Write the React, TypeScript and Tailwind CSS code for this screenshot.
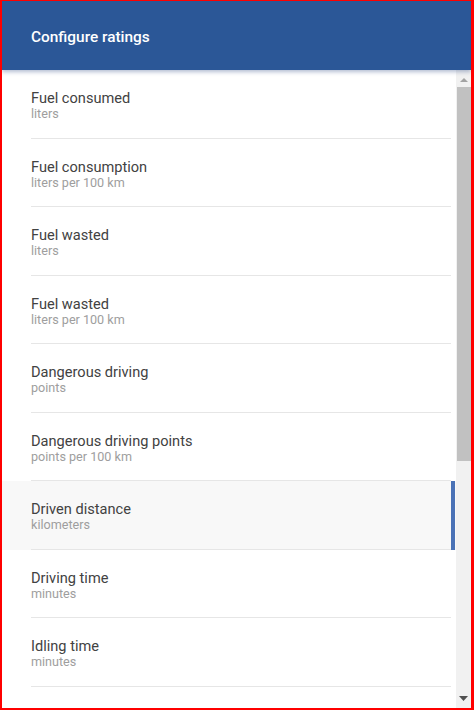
import React from "react";

const items: { title: string; unit: string; active?: boolean }[] = [
  { title: "Fuel consumed", unit: "liters" },
  { title: "Fuel consumption", unit: "liters per 100 km" },
  { title: "Fuel wasted", unit: "liters" },
  { title: "Fuel wasted", unit: "liters per 100 km" },
  { title: "Dangerous driving", unit: "points" },
  { title: "Dangerous driving points", unit: "points per 100 km" },
  { title: "Driven distance", unit: "kilometers", active: true },
  { title: "Driving time", unit: "minutes" },
  { title: "Idling time", unit: "minutes" },
  { title: "", unit: "" },
];

export default function App() {
  return (
    <div
      className="w-[474px] h-[710px] overflow-hidden bg-white border-solid border-[#ff0000] border-t-[1px] border-l-[2px] border-r-[3px] border-b-[2px] flex flex-col"
      style={{ fontFamily: "Roboto, 'Liberation Sans', sans-serif" }}
    >
      <div className="relative z-10 h-[69px] shrink-0 bg-[#2b5797] pl-[29px] pt-[26px] shadow-[0_2px_4px_rgba(40,70,130,0.35)]">
        <div className="text-[15.4px] leading-[20px] font-medium text-white">Configure ratings</div>
      </div>
      <div className="flex flex-1 min-h-0">
        <div className="flex-1 overflow-hidden">
          {items.map((it, i) => (
            <div
              key={i}
              className={
                "h-[68.5px] pl-[29px] flex " + (it.active ? "bg-[#f8f8f8]" : "bg-white")
              }
            >
              <div className="flex-1 border-b border-[#e6e6e6] pt-[19px]">
                {it.title ? (
                  <>
                    <div className="text-[14.6px] leading-[18px] text-[#424242]">{it.title}</div>
                    <div className="text-[12.6px] leading-[13px] text-[#9e9e9e]">{it.unit}</div>
                  </>
                ) : null}
              </div>
              {it.active ? <div className="w-[4px] bg-[#4a72b6] mr-[1px]" /> : <div className="w-[5px]" />}
            </div>
          ))}
        </div>
        <div className="w-[15px] shrink-0 bg-[#f1f1f1] flex flex-col items-center">
          <div className="h-[17px] w-full flex items-center justify-center pt-[2px]">
            <svg width="8" height="4" viewBox="0 0 8 4">
              <polygon points="4,0 8,4 0,4" fill="#a3a3a3" />
            </svg>
          </div>
          <div className="w-[14px] ml-[1px] h-[374px] bg-[#c1c1c1]" />
          <div className="flex-1" />
          <div className="h-[19px] w-full flex items-center justify-center">
            <svg width="9" height="5" viewBox="0 0 9 5">
              <polygon points="0,0 9,0 4.5,5" fill="#505050" />
            </svg>
          </div>
        </div>
      </div>
    </div>
  );
}
